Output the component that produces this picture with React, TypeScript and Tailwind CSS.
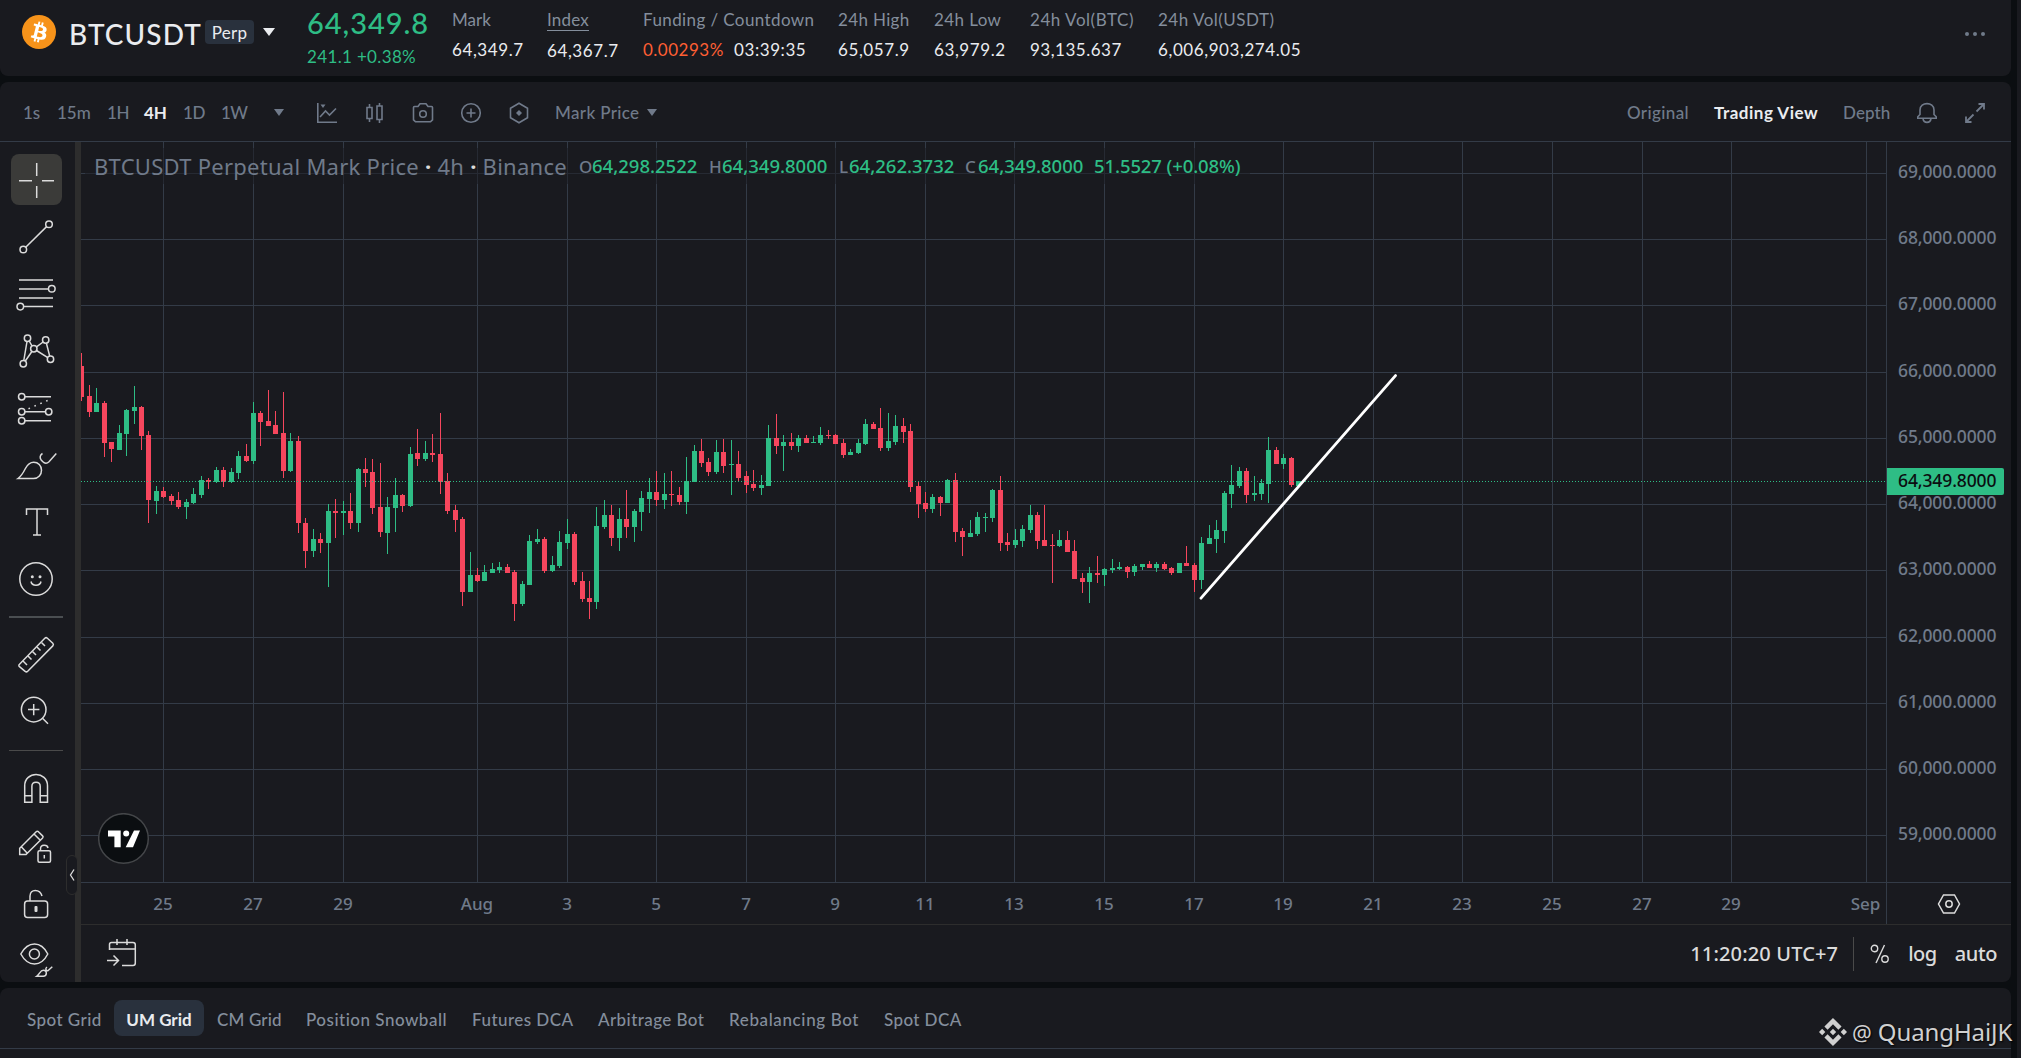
import React from "react";

const UP = "#2ebd85";
const DOWN = "#f6465d";

/* High, body top, body bottom, low (offsets from y = 340) and direction for every 4h bar. */
const BARS = `13,26,57,61,R 45,56,72,77,R 48,63,72,72,G 61,63,103,117,R 102,102,109,122,R 85,93,110,110,G 69,70,94,116,G 46,67,71,84,G 66,67,96,110,R 91,95,160,183,R
146,151,161,174,G 147,151,157,158,R 154,156,161,165,R 152,160,167,169,R 159,162,167,179,G 148,154,163,164,G 136,140,155,158,G 138,140,142,149,R 127,130,142,143,G 127,130,142,147,R
128,132,142,143,G 111,116,133,139,G 104,116,121,122,R 62,73,121,124,G 71,73,82,106,R 50,81,86,86,R 71,85,94,94,R 52,93,131,138,R 93,101,131,132,G 96,101,183,193,R
178,183,211,228,R 189,199,211,217,G 193,199,203,213,R 164,171,203,247,G 159,171,173,198,R 161,171,173,195,G 153,171,183,189,R 128,129,183,192,G 118,129,133,147,R 119,132,168,174,R
123,167,192,197,R 157,167,193,214,G 138,155,168,192,G 154,155,166,172,R 107,114,166,167,G 89,113,119,126,R 101,113,119,121,G 94,113,115,122,R 73,114,142,154,R 133,141,171,174,R
165,170,180,192,R 177,179,252,266,R 212,235,252,252,G 228,235,241,242,R 225,232,241,241,G 223,229,233,233,G 222,227,230,233,G 224,227,233,233,R 230,232,264,281,R 241,244,264,266,G
195,201,245,245,G 189,199,202,204,G 197,199,231,233,R 216,225,231,232,G 191,202,226,228,G 179,194,203,209,G 192,194,242,245,R 232,241,259,262,R 241,258,262,279,R 167,186,262,269,G
160,175,187,189,G 165,175,198,206,R 168,179,198,211,G 150,179,187,198,R 169,171,187,202,G 151,158,172,191,G 138,152,159,173,G 131,152,160,166,R 133,154,160,169,G 131,154,155,166,R
147,155,162,165,R 117,141,162,174,G 105,111,142,142,G 99,111,123,127,R 118,122,132,136,R 100,112,132,134,G 99,112,126,133,R 100,124,125,155,G 111,124,138,141,R 131,136,145,153,R
130,144,148,151,R 135,145,148,155,G 85,98,146,146,G 74,98,106,114,R 95,102,106,131,G 93,102,106,110,R 95,98,106,112,G 95,98,103,103,R 96,102,103,103,G 87,95,103,105,G
90,95,96,99,R 94,95,104,104,R 99,103,115,118,R 109,112,115,115,G 99,103,113,114,G 79,84,104,105,G 82,84,89,89,R 68,88,108,111,R 73,101,108,111,G 75,86,102,105,G
78,86,92,103,R 84,91,147,152,R 142,146,164,178,R 152,163,169,172,R 154,157,169,173,G 156,157,163,176,R 139,140,163,163,G 133,140,192,202,R 188,191,197,216,R 180,193,197,197,G
172,177,194,196,G 173,177,178,192,G 149,150,178,182,G 136,150,203,211,R 193,202,205,211,R 189,200,205,208,G 185,189,201,207,G 165,175,190,193,G 172,175,201,209,R 165,200,206,206,R
194,205,206,243,R 190,200,206,207,G 191,200,212,212,R 200,211,239,239,R 233,238,242,253,R 227,233,242,263,G 216,233,235,243,R 228,229,235,246,G 219,228,230,233,G 222,227,229,230,G
226,227,232,238,R 224,226,232,236,G 224,224,227,230,G 221,224,228,228,R 222,224,228,232,G 222,224,229,230,R 227,228,233,235,R 223,223,233,233,G 206,223,226,226,R 223,225,240,252,R
197,203,240,249,G 185,198,204,204,G 180,190,199,213,G 151,153,191,203,G 125,145,154,168,G 127,131,146,148,G 128,131,155,163,R 136,153,155,161,G 139,143,154,160,G 97,110,144,163,G
107,110,124,124,R 114,118,124,129,G 117,118,145,147,R 141,141,146,147,G`
  .split(/\s+/)
  .map((s) => {
    const p = s.split(",");
    return { h: +p[0], t: +p[1], b: +p[2], l: +p[3], up: p[4] === "G" };
  });

const TIMES: [number, string][] = [
  [163, "25"], [253, "27"], [343, "29"], [477, "Aug"], [567, "3"], [656, "5"], [746, "7"], [835, "9"], [925, "11"],
  [1014, "13"], [1104, "15"], [1194, "17"], [1283, "19"], [1373, "21"], [1462, "23"], [1552, "25"], [1642, "27"], [1731, "29"], [1866, "Sep"],
];
const PRICES: [number, string][] = [
  [173, "69,000.0000"], [239, "68,000.0000"], [305, "67,000.0000"], [372, "66,000.0000"], [438, "65,000.0000"], [504, "64,000.0000"],
  [570, "63,000.0000"], [637, "62,000.0000"], [703, "61,000.0000"], [769, "60,000.0000"], [835, "59,000.0000"],
];

function Chart() {
  return (
    <svg width="1805" height="740" viewBox="81 142 1805 740" className="block shrink-0">
      <g fill="#333b47">
        {TIMES.map(([x]) => <rect key={x} x={x} y="142" width="1" height="740" />)}
        {PRICES.map(([y]) => <rect key={y} x="81" y={y} width="1805" height="1" />)}
      </g>
      {BARS.map((c, i) => {
        const x = Math.ceil(80.75 + i * 7.4667);
        return (
          <g key={i} fill={c.up ? UP : DOWN}>
            <rect x={x} y={340 + c.h} width="1" height={c.l - c.h} />
            <rect x={x - 2} y={340 + c.t} width="5" height={c.b - c.t} />
          </g>
        );
      })}
      <path d="M81 481.5H1886" stroke={UP} strokeDasharray="1 2" />
      <path d="M1201 598.2L1395.5 375.6" stroke="#fff" strokeWidth="2.8" strokeLinecap="round" />
    </svg>
  );
}

function PriceAxis() {
  return (
    <svg width="124" height="740" viewBox="1887 142 124 740" className="block font-['Noto_Sans',sans-serif] text-[17.5px] font-medium">
      {PRICES.map(([y, t]) => (
        <text key={t} x="1898" y={y + 5} fill="#707a8a" textLength="98.5">{t}</text>
      ))}
      <path d="M1887 468h115a2 2 0 0 1 2 2v23a2 2 0 0 1-2 2h-115z" fill={UP} />
      <text x="1898" y="487" fill="#0b0e11" textLength="98.5">64,349.8000</text>
    </svg>
  );
}

function TimeAxis() {
  return (
    <svg width="1805" height="41" viewBox="81 883 1805 41" className="block font-['Noto_Sans',sans-serif] text-[17px] font-medium">
      {TIMES.map(([x, t]) => (
        <text key={x} x={x === 1866 ? 1865.5 : x} y="910" textAnchor="middle" fill="#707a8a">{t}</text>
      ))}
    </svg>
  );
}

function Tool({ y, h = 57, children }: { y: number; h?: number; children: React.ReactNode }) {
  return (
    <svg width="75" height={h} viewBox={`0 ${y} 75 ${h}`} fill="none" stroke="#dbdbdb" strokeWidth="1.5" className="block shrink-0">
      {children}
    </svg>
  );
}

function Tools() {
  return (
    <div className="flex h-[840px] w-[75px] shrink-0 flex-col pt-[10px]">
      <Tool y={152}>
        <rect x="11" y="154" width="51" height="51" rx="8" fill="#3b3b39" stroke="none" />
        <path d="M19 180.700h13M42 180.700h12M36.700 163v13M36.700 186v12" />
      </Tool>
      <Tool y={209}>
        <circle cx="23.300" cy="249.500" r="3.300" /><circle cx="49" cy="224.300" r="3.300" /><path d="M25.700 247.200L46.600 226.600" />
      </Tool>
      <Tool y={266}>
        <path d="M19 280h34M19 289h29.500M19 298h34M23.500 306.600H53" />
        <circle cx="51.800" cy="288.700" r="3.300" /><circle cx="20.300" cy="306.600" r="3.300" />
      </Tool>
      <Tool y={323}>
        <circle cx="27.500" cy="338.300" r="3.200" /><circle cx="45.700" cy="340" r="3.200" /><circle cx="33.800" cy="348.800" r="3.200" />
        <circle cx="23.300" cy="363.700" r="3.200" /><circle cx="50.500" cy="359.300" r="3.200" />
        <path d="M27 341.500l-3.200 19M29.200 341l2.900 5.100M36.500 346.900l6.600-4.900M46.400 343.200l3.300 12.900M36.500 350.500l11.300 7.100M31.900 351.500l-6.600 9.500" />
      </Tool>
      <Tool y={380}>
        <circle cx="21.700" cy="396.700" r="3.200" /><circle cx="21.700" cy="411.800" r="3.200" /><circle cx="48.700" cy="411.800" r="3.200" /><circle cx="21.700" cy="420.700" r="3.200" />
        <path d="M25 396.700h26M25 411.800h20.500M25 420.700h26" />
        <path d="M28.500 408.700l21-9" strokeDasharray="1.600 4.800" />
      </Tool>
      <Tool y={437}>
        <path d="M18 478.500h15.500c5 0 8-3.800 8-8.300 0-4.700-3.300-8-7.800-8-4 0-6.200 2.300-8.300 6.300-2 4-3.900 7.500-7.400 10z" />
        <path d="M42.500 453.500c-2.500 1.500-3 4-1.500 6.200l1.600 1.800c2.200 2.300 4.400 2.200 6.400.2l7.300-8.200" />
      </Tool>
      <Tool y={494}>
        <path d="M26.500 515v-6h21v6M37 509v26M33 535h8" />
      </Tool>
      <Tool y={551}>
        <circle cx="36" cy="579" r="16.200" />
        <circle cx="32.300" cy="576.800" r="1.500" fill="#dbdbdb" stroke="none" /><circle cx="40" cy="576.800" r="1.500" fill="#dbdbdb" stroke="none" />
        <path d="M31 581.500c1 5 9 5 10 0" />
      </Tool>
      <div className="mt-2 ml-[9px] h-[2px] w-[54px] shrink-0 bg-[#4a4e51]" />
      <div className="h-2 shrink-0" />
      <Tool y={626}>
        <path d="M19.500 664.200L44.800 638.200q1.300-1.200 2.600 0l5.400 5.100q1.200 1.300 0 2.600L27.700 671.300q-1.300 1.200-2.600 0l-5.600-4.600q-1.300-1.300 0-2.500z" />
        <path d="M23 661l4 4M28 656l3.500 3.500M32.500 651.500l3.500 3.500M37 647l3.500 3.500M41.500 642.500l3.500 3.500" />
      </Tool>
      <Tool y={683}>
        <circle cx="33.700" cy="709.600" r="12.300" /><path d="M42.500 718.300l5.500 5.500M28 709.600h11.400M33.700 704v11.300" />
      </Tool>
      <div className="mt-[10px] ml-[9px] h-px w-[54px] shrink-0 bg-[#4a4a4a]" />
      <div className="h-[9px] shrink-0" />
      <Tool y={760}>
        <path d="M24.700 802.300v-16.500c0-15 22.800-15 22.800 0v16.500h-7.300v-16c0-5.400-8.300-5.400-8.300 0v16zM24.700 795.700h7.200M40.200 795.700h7.300" />
      </Tool>
      <Tool y={817}>
        <path d="M19.700 854.500v-6.300l16.500-16.500q1-1 2.200 0l4.200 4.200q1 1 0 2.100L26 854.500zM34 834l6.300 6.300M21.500 847l6 6.500" />
        <rect x="38" y="850.700" width="12.500" height="11.500" rx="1.500" /><path d="M40.500 850.500v-1.700c0-4.500 6.800-4.500 7.500-.8M44.300 855v3.500" />
      </Tool>
      <Tool y={874}>
        <rect x="24.600" y="901" width="23" height="16.500" rx="3" /><path d="M30 901v-5c0-7.500 10-7.500 12 0" /><rect x="34.500" y="906" width="3" height="6" rx="1" fill="#dbdbdb" stroke="none" />
      </Tool>
      <Tool y={931} h={51}>
        <path d="M20.800 954c7.300-13.300 20.200-13.300 27 0-6.800 13.300-19.700 13.300-27 0z" /><circle cx="34.400" cy="954" r="5" />
        <path d="M36.700 976.300h6.500c4 0 4.300-6 .2-6-3.200 0-3.500 3.500-6.700 6zM47 967c-2 1.500-1.200 4 .8 3.800l4.500-4" />
      </Tool>
    </div>
  );
}

const Caret = ({ w, h, c }: { w: number; h: number; c: string }) => (
  <svg width={w} height={h} viewBox="0 0 10 7" preserveAspectRatio="none" className="block shrink-0"><path d="M0 0h10L5 7z" fill={c} /></svg>
);

function T({ className = "", children }: { className?: string; children: React.ReactNode }) {
  return <span className={"inline-block shrink-0 whitespace-pre " + className}>{children}</span>;
}

function Stat({ col, label, head, children }: { col: string; label: string; head: string; children: React.ReactNode }) {
  return (
    <div className={"flex shrink-0 flex-col items-start text-[17px] leading-5 " + col}>
      <T className={"text-[#848e9c] " + head}>{label}</T>
      <div className="flex pt-[10px] tracking-[0.58px] text-[#eaecef]">{children}</div>
    </div>
  );
}

function Header() {
  return (
    <header className="flex h-[76px] w-[2011px] rounded-b-lg bg-[#191a1f]">
      <div className="flex h-[64px] w-[307px] shrink-0 items-center pl-[22px]">
        <svg width="34" height="34" viewBox="0 0 32 32" className="shrink-0">
          <circle cx="16" cy="16" r="16" fill="#f7931a" />
          <path fill="#fff" d="M23.189 14.020c.314-2.096-1.283-3.223-3.465-3.975l.708-2.840-1.728-.430-.690 2.765c-.454-.114-.920-.220-1.385-.326l.695-2.783L15.596 6l-.708 2.839c-.376-.086-.746-.170-1.104-.260l.002-.009-2.384-.595-.460 1.846s1.283.294 1.256.312c.700.175.826.638.805 1.006l-.806 3.235c.048.012.110.030.180.057l-.183-.045-1.130 4.532c-.086.212-.303.531-.793.410.018.025-1.256-.313-1.256-.313l-.858 1.978 2.250.561c.418.105.828.215 1.231.318l-.715 2.872 1.727.430.708-2.840c.472.127.930.245 1.378.357l-.706 2.828 1.728.430.715-2.866c2.948.558 5.164.333 6.097-2.333.752-2.146-.037-3.385-1.588-4.192 1.130-.260 1.980-1.003 2.207-2.538zm-3.950 5.538c-.533 2.147-4.148.986-5.320.695l.950-3.805c1.172.293 4.929.872 4.370 3.110zm.535-5.569c-.487 1.953-3.495.960-4.470.717l.860-3.450c.975.243 4.118.696 3.610 2.733z" />
        </svg>
        <div className="mt-[5px] ml-[13px] w-[136px]"><T className="text-[28px] leading-8 font-medium tracking-[1.1px] text-[#eaecef]">BTCUSDT</T></div>
        <span className="flex h-6 w-[49px] items-center justify-center rounded bg-[#29313d] pt-px text-[17px] tracking-[0.3px] text-[#eaecef]">Perp</span>
        <div className="ml-[9px]"><Caret w={12} h={8} c="#eaecef" /></div>
      </div>
      <div className="flex w-[145px] shrink-0 flex-col items-start text-[#2ebd85]">
        <T className="mt-[7px] text-[29px] leading-8 font-medium tracking-[0.95px]">64,349.8</T>
        <T className="mt-2 text-[17px] leading-5 tracking-[0.35px]">241.1 +0.38%</T>
      </div>
      <div className="flex pt-[10px]">
        <Stat col="w-[95px]" label="Mark" head=""><T>64,349.7</T></Stat>
        <Stat col="w-[96px]" label="Index" head="border-b border-[#848e9c] tracking-[0.2px]"><T>64,367.7</T></Stat>
        <Stat col="w-[195px]" label="Funding / Countdown" head="tracking-[0.4px]">
          <div className="w-[91px]"><T className="tracking-[0.5px] text-[#ff5f33]">0.00293%</T></div>
          <T>03:39:35</T>
        </Stat>
        <Stat col="w-[96px]" label="24h High" head="tracking-[0.35px]"><T>65,057.9</T></Stat>
        <Stat col="w-[96px]" label="24h Low" head="tracking-[0.4px]"><T>63,979.2</T></Stat>
        <Stat col="w-[128px]" label="24h Vol(BTC)" head="tracking-[0.54px]"><T className="tracking-[0.5px]">93,135.637</T></Stat>
        <Stat col="w-[160px]" label="24h Vol(USDT)" head="tracking-[0.5px]"><T>6,006,903,274.05</T></Stat>
      </div>
      <svg width="20" height="6" viewBox="0 0 20 6" fill="#707a8a" className="mt-[31px] mr-[26px] ml-auto"><circle cx="2" cy="3" r="2" /><circle cx="10" cy="3" r="2" /><circle cx="18" cy="3" r="2" /></svg>
    </header>
  );
}

function Toolbar() {
  const ic = { width: 24, height: 24, viewBox: "0 0 24 24", fill: "none", stroke: "#707a8a", strokeWidth: 1.6, className: "block shrink-0" };
  return (
    <div className="flex h-[60px] items-center border-b border-[#333b47] pt-[2px] text-[17px] leading-5 font-medium text-[#707a8a]">
      <div className="flex w-[250px] shrink-0 pl-[23px]">
        <div className="w-[34px]"><T>1s</T></div>
        <div className="w-[50px]"><T>15m</T></div>
        <div className="w-[37px]"><T className="-tracking-[0.4px]">1H</T></div>
        <div className="w-[39px] font-bold text-[#eaecef]"><T>4H</T></div>
        <div className="w-[38px]"><T className="-tracking-[0.3px]">1D</T></div>
        <div><T className="-tracking-[0.5px]">1W</T></div>
      </div>
      <div className="w-[65px] pl-6"><Caret w={10} h={7} c="#707a8a" /></div>
      <div className="flex w-[240px] shrink-0 gap-6">
        <svg {...ic}><path d="M2.800 2v19.300H22M5 16l5.500-6 4 4 6.500-6.500" /><path d="M5.500 3.500h5L8 7z" fill="#707a8a" stroke="none" /></svg>
        <svg {...ic}><path d="M4 6.500h5v11H4zM6.500 3v3.500M6.500 17.500V21M14 5h5v13.500h-5zM16.500 2v3M16.500 18.500V22" /></svg>
        <svg {...ic}><path d="M2.500 6.500q0-1 1-1H7L9 2.800h6l2 2.700h3.500q1 0 1 1v12.300l-2 2h-15l-2-2z" /><circle cx="12" cy="13" r="3.300" /></svg>
        <svg {...ic}><circle cx="12" cy="12" r="9.300" /><path d="M12 7.500v9M7.500 12h9" /></svg>
        <svg {...ic}><path d="M12 2.300l8.500 5v9.400l-8.500 5-8.500-5V7.300z" /><path d="M12 9l3 3-3 3-3-3z" fill="#707a8a" stroke="none" /></svg>
      </div>
      <div className="w-[92px]"><T className="tracking-[0.36px]">Mark Price</T></div>
      <Caret w={10} h={7} c="#707a8a" />
      <div className="ml-auto flex shrink-0 items-center pr-6">
        <div className="w-[87px]"><T className="tracking-[0.38px]">Original</T></div>
        <div className="w-[129px] font-bold text-[#eaecef]"><T className="tracking-[0.5px]">Trading View</T></div>
        <div className="w-[72px]"><T className="tracking-[0.1px]">Depth</T></div>
        <svg {...ic}><path d="M2.800 17.300v-1.500L5 13.500V9c0-8.500 14-8.500 14 0v4.500l2.200 2.300v1.500zM8 18c1 4.500 7 4.500 8 0" /></svg>
        <svg {...ic} strokeWidth={1.8} className="ml-6 block"><path d="M15.500 3H21v5.500M20.500 3.500L13.500 10.500M8.500 21H3v-5.500M3.500 20.500L10.500 13.500" /></svg>
      </div>
    </div>
  );
}

function Legend() {
  const v = "text-[#2ebd85]";
  const dot = <span className="font-bold text-[#dbdbdb]">·</span>;
  return (
    <div className="absolute top-[6px] left-[4px] flex h-[36px] w-[1165px] items-center bg-[#191a1f]/50 pl-[9px] font-['Noto_Sans',sans-serif] text-[#707a8a]">
      <div className="w-[485px]">
        <T className="text-[22px] leading-9 tracking-[0.27px]">BTCUSDT Perpetual Mark Price {dot} 4h {dot} Binance</T>
      </div>
      <div className="flex items-baseline text-[18.5px] font-medium">
        <div className="flex w-[130px] items-baseline"><T className="w-[13px] text-[17px]">O</T><T className={v}>64,298.2522</T></div>
        <div className="flex w-[130px] items-baseline"><T className="w-[13px] text-[17px]">H</T><T className={v}>64,349.8000</T></div>
        <div className="flex w-[126px] items-baseline"><T className="w-[10px] text-[17px]">L</T><T className={v}>64,262.3732</T></div>
        <div className="flex w-[129px] items-baseline"><T className="w-[13px] text-[17px]">C</T><T className={v}>64,349.8000</T></div>
        <T className={v + " -tracking-[0.1px]"}>51.5527 (+0.08%)</T>
      </div>
    </div>
  );
}

function Tabs() {
  return (
    <nav className="flex h-[61px] items-center border-b border-[#333b47] pl-[27px] text-[17px] leading-5 font-medium text-[#848e9c]">
      <div className="w-[87px] pt-[3px]"><T className="tracking-[0.45px]">Spot Grid</T></div>
      <span className="mr-[13px] flex h-9 w-[90px] items-center justify-center rounded-lg bg-[#29313d] pt-[3px] font-bold text-[#eaecef]">UM Grid</span>
      <div className="w-[89px] pt-[3px]"><T className="tracking-[0.15px]">CM Grid</T></div>
      <div className="w-[166px] pt-[3px]"><T className="tracking-[0.5px]">Position Snowball</T></div>
      <div className="w-[126px] pt-[3px]"><T className="tracking-[0.45px]">Futures DCA</T></div>
      <div className="w-[131px] pt-[3px]"><T className="tracking-[0.42px]">Arbitrage Bot</T></div>
      <div className="w-[155px] pt-[3px]"><T className="tracking-[0.62px]">Rebalancing Bot</T></div>
      <div className="pt-[3px]"><T className="tracking-[0.4px]">Spot DCA</T></div>
    </nav>
  );
}

export default function App() {
  return (
    <div className="relative flex h-[1058px] w-[2021px] gap-[6px] overflow-hidden bg-[#0b0e11] font-['Lato',sans-serif]">
      <div className="flex w-[2011px] flex-col gap-[6px]">
        <Header />
        <section className="h-[900px] overflow-hidden rounded-lg bg-[#191a1f]">
          <Toolbar />
          <div className="flex h-[840px]">
            <Tools />
            <div className="relative w-[6px] shrink-0 bg-[#2d2d2d]">
              <div className="absolute top-[713px] -left-[9px] flex h-[40px] w-[12px] items-center justify-center rounded-md border border-[#2d2d2d] bg-[#191a1f]">
                <svg width="6" height="12" viewBox="0 0 6 12" fill="none" stroke="#dbdbdb" strokeWidth="1.300"><path d="M5 .5L1.500 6 5 11.500" /></svg>
              </div>
            </div>
            <div className="flex flex-col">
              <div className="flex border-b border-[#333b47]">
                <div className="relative">
                  <Chart />
                  <Legend />
                  <svg width="52" height="52" viewBox="0 0 52 52" className="absolute top-[671px] left-[17px]">
                    <circle cx="25.500" cy="25.500" r="24.800" fill="#0b0e11" stroke="#444649" strokeWidth="1.500" />
                    <path d="M10 17.500h12.700v16.800h-6.300V23.500H10zM36 17.500h6L35 34.300h-7.300z" fill="#fff" /><circle cx="28.200" cy="20.500" r="3" fill="#fff" />
                  </svg>
                </div>
                <div className="border-l border-[#333b47]"><PriceAxis /></div>
              </div>
              <div className="flex h-[42px] border-b border-[#2d2d2d]">
                <TimeAxis />
                <div className="flex w-[125px] items-center justify-center border-l border-[#333b47]">
                  <svg width="24" height="22" viewBox="0 0 24 22" fill="none" stroke="#dbdbdb" strokeWidth="1.500"><path d="M6.500 2h11l5 9-5 9h-11l-5-9z" /><circle cx="12" cy="11" r="3.200" /></svg>
                </div>
              </div>
              <div className="flex h-[57px] items-center font-['Noto_Sans',sans-serif] text-[20px] text-[#dbdbdb]">
                <svg width="32" height="32" viewBox="105 938 32 32" fill="none" stroke="#dbdbdb" strokeWidth="1.500" className="ml-6">
                  <path d="M109.500 950v-5.500q0-2 2-2H133q2.300 0 2.300 2.300V963q0 2.500-2.300 2.500h-11M109.500 949h25.500M117 939v6M127 939v6M107 960.500h11.500M113.500 955.500l5 5-5 5" />
                </svg>
                <div className="ml-auto flex items-center pr-[14px] font-medium">
                  <T className="tracking-[0.15px]">11:20:20 UTC+7</T>
                  <i className="mr-4 ml-[15px] h-[34px] w-px bg-[#4a4a4a]" />
                  <svg width="20" height="20" viewBox="0 0 20 20" fill="none" stroke="#dbdbdb" strokeWidth="1.400"><circle cx="4.500" cy="4.500" r="3.200" /><circle cx="15" cy="15" r="3.200" /><path d="M14.500 1L6 19" /></svg>
                  <T className="ml-[18px] -tracking-[0.5px]">log</T>
                  <T className="ml-[18px] -tracking-[0.4px]">auto</T>
                </div>
              </div>
            </div>
          </div>
        </section>
        <section className="h-[70px] rounded-t-lg bg-[#191a1f]"><Tabs /></section>
      </div>
      <div className="w-1 bg-[#191a1f]" />
      <div className="absolute top-[1016px] left-[1819px] flex items-center font-['Noto_Sans',sans-serif] text-[24px] leading-8 text-[#d0d0d0] [text-shadow:1px_1px_2px_#000]">
        <svg width="28" height="28" viewBox="0 0 24 24" fill="#d0d0d0"><path d="M16.624 13.920l2.717 2.716-7.353 7.353-7.353-7.352 2.717-2.717 4.636 4.660 4.636-4.660zm4.637-4.636L24 12l-2.715 2.716L18.568 12l2.693-2.716zm-9.272 0l2.716 2.692-2.717 2.717L9.272 12l2.716-2.715zm-9.273 0L5.410 12l-2.692 2.692L0 12l2.716-2.716zM11.990.011l7.352 7.329-2.717 2.715-4.636-4.636-4.636 4.660-2.717-2.716L11.989.011z" /></svg>
        <T className="ml-[5px] text-[22px]">@</T>
        <T className="ml-[6px] -tracking-[0.1px]">QuangHaiJK</T>
      </div>
    </div>
  );
}
